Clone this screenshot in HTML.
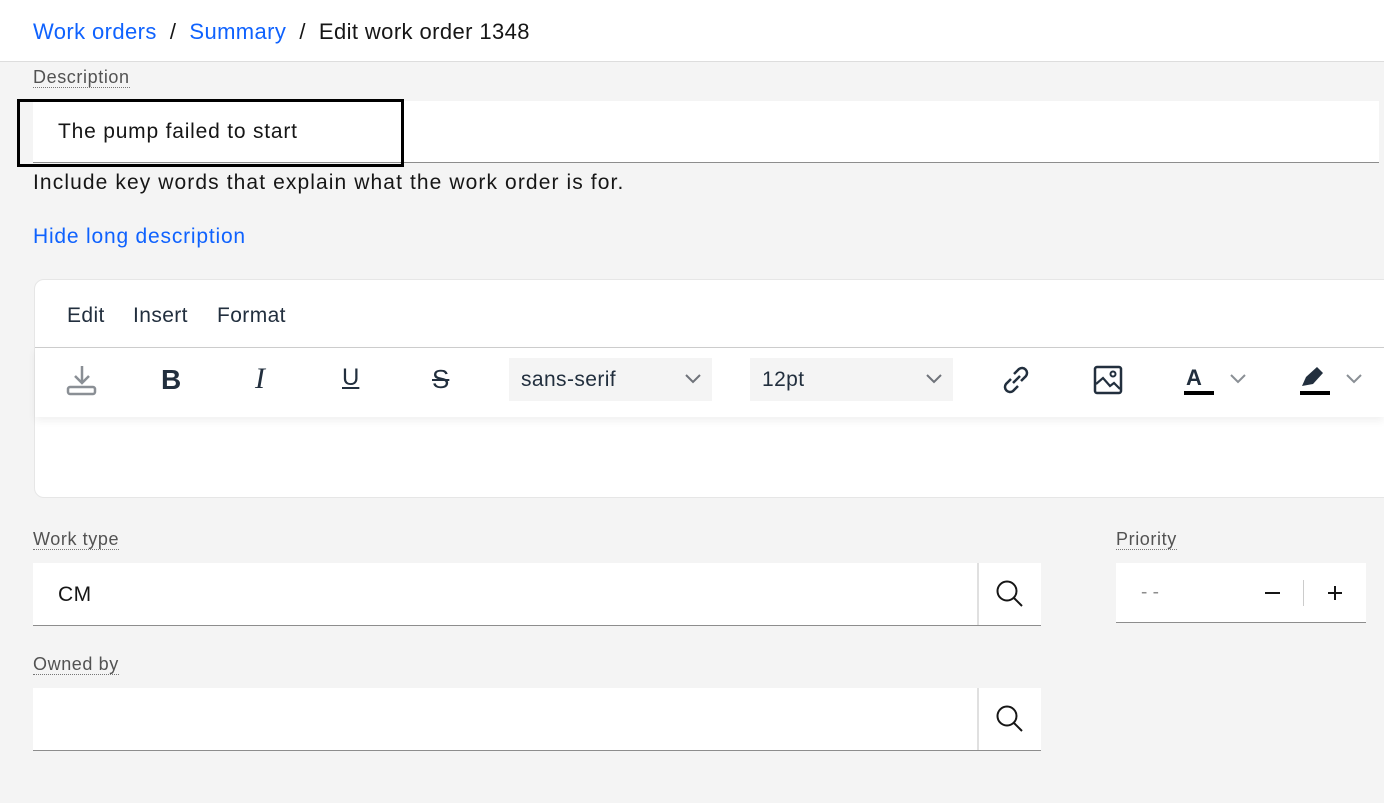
<!DOCTYPE html>
<html><head><style>
*{box-sizing:border-box;margin:0;padding:0}
body{width:1384px;height:803px;background:#f4f4f4;font-family:"Liberation Sans",sans-serif;color:#161616;position:relative;overflow:hidden}
.abs{position:absolute;white-space:nowrap}
.hdr{left:0;top:0;width:1384px;height:62px;background:#fff;border-bottom:1px solid #ddd}
.bc{left:33px;top:19px;font-size:22px;letter-spacing:0.4px;color:#161616}
.bc a{color:#0f62fe;text-decoration:none}
.lbl{font-size:18px;letter-spacing:0.6px;color:#525252;border-bottom:1px dotted #777;line-height:20px}
.input{background:#fff;border-bottom:1px solid #8d8d8d}
.ico{stroke:#161616;fill:none;stroke-width:2}
.mn{font-size:21px;color:#222f3e;letter-spacing:0.4px}
</style></head><body>
<div class="abs hdr"></div>
<div class="abs bc"><a>Work orders</a>&nbsp;&nbsp;/&nbsp;&nbsp;<a>Summary</a>&nbsp;&nbsp;/&nbsp;&nbsp;Edit work order 1348</div>

<div class="abs lbl" style="left:33px;top:67px">Description</div>
<div class="abs input" style="left:33px;top:101px;width:1346px;height:62px"></div>
<div class="abs" style="left:17px;top:99px;width:387px;height:68px;border:3px solid #000"></div>
<div class="abs" style="left:58px;top:120px;font-size:21px;letter-spacing:0.8px">The pump failed to start</div>
<div class="abs" style="left:33px;top:171px;font-size:21px;letter-spacing:1.1px">Include key words that explain what the work order is for.</div>
<div class="abs" style="left:33px;top:225px;font-size:21px;letter-spacing:0.8px;color:#0f62fe">Hide long description</div>

<div class="abs" style="left:34px;top:279px;width:1360px;height:219px;background:#fff;border:1px solid #e6e6e6;border-radius:10px"></div>
<div class="abs mn" style="left:67px;top:304px">Edit</div>
<div class="abs mn" style="left:133px;top:304px">Insert</div>
<div class="abs mn" style="left:217px;top:304px">Format</div>
<div class="abs" style="left:35px;top:347px;width:1349px;height:70px;border-top:1px solid #ccc;box-shadow:0 4px 8px rgba(0,0,0,.06);background:#fff"></div>
<svg class="abs" style="left:60px;top:360px" width="44" height="40"><path d="M22 6v16M15 16l7 7 7-7" stroke="#8a8f95" stroke-width="2.5" fill="none"/><rect x="8" y="27" width="27" height="7" rx="2" fill="none" stroke="#8a8f95" stroke-width="2.5"/></svg>
<div class="abs" style="left:161px;top:364px;font-size:28px;font-weight:bold;color:#222f3e">B</div>
<div class="abs" style="left:255px;top:362px;font-size:30px;font-style:italic;font-family:'Liberation Serif',serif;color:#222f3e">I</div>
<div class="abs" style="left:342px;top:364px;font-size:24px;color:#222f3e;text-decoration:underline">U</div>
<div class="abs" style="left:432px;top:364px;font-size:26px;color:#222f3e;text-decoration:line-through">S</div>
<div class="abs" style="left:509px;top:358px;width:203px;height:43px;background:#f4f4f4"></div>
<div class="abs mn" style="left:521px;top:368px">sans-serif</div>
<svg class="abs" style="left:683px;top:372px" width="20" height="14"><path d="M3 3l7 7 7-7" stroke="#6f737a" stroke-width="2" fill="none"/></svg>
<div class="abs" style="left:750px;top:358px;width:203px;height:43px;background:#f4f4f4"></div>
<div class="abs mn" style="left:762px;top:368px">12pt</div>
<svg class="abs" style="left:924px;top:372px" width="20" height="14"><path d="M3 3l7 7 7-7" stroke="#6f737a" stroke-width="2" fill="none"/></svg>
<svg class="abs" style="left:1000px;top:364px" width="34" height="32"><g stroke="#222f3e" stroke-width="2.5" fill="none"><path d="M14 10l5-5a5 5 0 0 1 7 7l-5 5"/><path d="M18 22l-5 5a5 5 0 0 1-7-7l5-5"/><path d="M13 19l7-7"/></g></svg>
<svg class="abs" style="left:1092px;top:364px" width="32" height="32"><rect x="3" y="3" width="26" height="26" rx="2" fill="none" stroke="#222f3e" stroke-width="2.5"/><path d="M4 20l7-6 7 8 4-3 6 6" fill="none" stroke="#222f3e" stroke-width="2.2"/><circle cx="21" cy="10" r="2.5" fill="none" stroke="#222f3e" stroke-width="2"/></svg>
<div class="abs" style="left:1186px;top:365px;font-size:22px;font-weight:bold;color:#222f3e">A</div>
<div class="abs" style="left:1184px;top:391px;width:30px;height:4px;background:#000"></div>
<svg class="abs" style="left:1228px;top:372px" width="20" height="14"><path d="M3 3l7 7 7-7" stroke="#8a8f95" stroke-width="2" fill="none"/></svg>
<svg class="abs" style="left:1298px;top:364px" width="34" height="24"><path d="M4 22l4-9 11-10 6 6-10 11z" fill="#222f3e"/></svg>
<div class="abs" style="left:1300px;top:391px;width:30px;height:4px;background:#000"></div>
<svg class="abs" style="left:1344px;top:372px" width="20" height="14"><path d="M3 3l7 7 7-7" stroke="#8a8f95" stroke-width="2" fill="none"/></svg>

<div class="abs lbl" style="left:33px;top:529px">Work type</div>
<div class="abs input" style="left:33px;top:563px;width:1008px;height:63px"></div>
<div class="abs" style="left:977px;top:563px;width:2px;height:62px;background:#e0e0e0"></div>
<div class="abs" style="left:58px;top:583px;font-size:21px;letter-spacing:0.5px">CM</div>
<svg class="abs" style="left:994px;top:578px" width="32" height="32"><circle cx="13" cy="13" r="9.5" class="ico"/><path d="M20 20l8 8" class="ico"/></svg>

<div class="abs lbl" style="left:1116px;top:529px">Priority</div>
<div class="abs input" style="left:1116px;top:563px;width:250px;height:60px"></div>
<div class="abs" style="left:1141px;top:582px;font-size:19px;color:#8d8d8d">- -</div>
<div class="abs" style="left:1265px;top:592px;width:15px;height:2px;background:#161616"></div>
<div class="abs" style="left:1303px;top:580px;width:1px;height:26px;background:#ccc"></div>
<div class="abs" style="left:1328px;top:592px;width:14px;height:2px;background:#161616"></div>
<div class="abs" style="left:1334px;top:586px;width:2px;height:14px;background:#161616"></div>

<div class="abs lbl" style="left:33px;top:654px">Owned by</div>
<div class="abs input" style="left:33px;top:688px;width:1008px;height:63px"></div>
<div class="abs" style="left:977px;top:688px;width:2px;height:62px;background:#e0e0e0"></div>
<svg class="abs" style="left:994px;top:703px" width="32" height="32"><circle cx="13" cy="13" r="9.5" class="ico"/><path d="M20 20l8 8" class="ico"/></svg>
</body></html>
